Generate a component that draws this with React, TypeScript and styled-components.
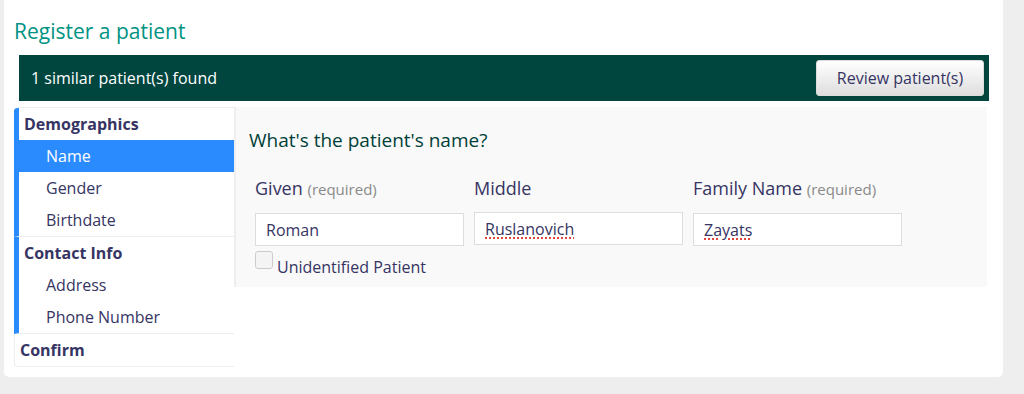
import React from 'react';
import styled, { createGlobalStyle } from 'styled-components';

const GlobalStyle = createGlobalStyle`
  html, body {
    margin: 0;
    padding: 0;
    background: #eeeeee;
    font-family: 'Open Sans', 'DejaVu Sans', sans-serif;
  }
`;

const navy = '#363463';
const blue = '#2a8bff';

const Card = styled.div`
  box-sizing: border-box;
  margin-left: 4px;
  width: 999px;
  height: 377px;
  background: #ffffff;
  border-radius: 0 0 5px 5px;
  padding: 19px 0 0 10px;
`;

const Title = styled.h2`
  margin: 0;
  font-size: 21px;
  line-height: 24px;
  font-weight: 400;
  color: #009384;
`;

const AlertBar = styled.div`
  box-sizing: border-box;
  margin: 12px 0 0 5px;
  width: 970px;
  height: 46px;
  background: #00463f;
  display: flex;
  align-items: center;
  justify-content: space-between;
  padding: 0 5px 0 12px;
  color: #ffffff;
  font-size: 16px;
`;

const ReviewButton = styled.button`
  box-sizing: border-box;
  width: 168px;
  height: 36px;
  border: 1px solid #dddddd;
  border-radius: 3px;
  background: linear-gradient(#ffffff, #dedede);
  color: ${navy};
  font-family: inherit;
  font-size: 16px;
  cursor: pointer;
`;

const Body = styled.div`
  display: flex;
  align-items: flex-start;
  margin-top: 6px;
`;

const Nav = styled.ul`
  list-style: none;
  margin: 0;
  padding: 0;
  width: 220px;
  border-top: 1px solid #eeeeee;
  border-top-left-radius: 4px;
  overflow: hidden;
`;

const Section = styled.li<{ $active: boolean }>`
  border-left: ${(p) => (p.$active ? `5px solid ${blue}` : '1px solid #eeeeee')};
  border-bottom: 1px solid #eeeeee;
  &:last-child {
    border-bottom-left-radius: 4px;
  }
`;

const SectionHead = styled.div`
  height: 32px;
  line-height: 32px;
  padding-left: 5px;
  font-size: 16px;
  font-weight: 700;
  color: ${navy};
`;

const NavItem = styled.div<{ $selected?: boolean }>`
  height: 32px;
  line-height: 32px;
  padding-left: 27px;
  font-size: 16px;
  color: ${(p) => (p.$selected ? '#ffffff' : navy)};
  background: ${(p) => (p.$selected ? blue : 'transparent')};
`;

const Content = styled.div`
  box-sizing: border-box;
  width: 753px;
  height: 180px;
  background: #f9f9f9;
  border-left: 2px solid #eeeeee;
  padding: 21px 0 0 13px;
`;

const Question = styled.h3`
  margin: 0;
  font-size: 19px;
  line-height: 24px;
  font-weight: 400;
  color: #003f38;
`;

const Fields = styled.div`
  display: flex;
  gap: 10px;
  margin: 24px 0 0 6px;
`;

const Field = styled.div`
  width: 209px;
`;

const Label = styled.label`
  display: block;
  font-size: 18px;
  line-height: 24px;
  color: ${navy};
`;

const Hint = styled.span`
  font-size: 15px;
  color: #8a8a8a;
`;

const InputBox = styled.div`
  position: relative;
  margin-top: 12px;
`;

const TextInput = styled.input`
  box-sizing: border-box;
  display: block;
  width: 100%;
  height: 33px;
  border: 1px solid #dddddd;
  background: #ffffff;
  padding: 0 0 0 10px;
  font-family: inherit;
  font-size: 16px;
  color: ${navy};
  outline: none;
`;

const Squiggle = styled.span`
  position: absolute;
  left: 11px;
  top: 5px;
  font-size: 16px;
  line-height: 22px;
  color: transparent;
  pointer-events: none;
  text-decoration: underline dotted #e0463e;
  text-decoration-thickness: 2px;
  text-underline-offset: 3px;
`;

const CheckRow = styled.label`
  display: flex;
  align-items: flex-start;
  gap: 4px;
  margin: 5px 0 0 6px;
  font-size: 16px;
  color: ${navy};
`;

const CheckBox = styled.span`
  box-sizing: border-box;
  width: 18px;
  height: 18px;
  border: 1px solid #cccccc;
  border-radius: 3px;
  background: #f4f4f4;
`;

const CheckText = styled.span`
  padding-top: 6px;
  line-height: 20px;
`;

const sections = [
  { title: 'Demographics', items: ['Name', 'Gender', 'Birthdate'], active: true },
  { title: 'Contact Info', items: ['Address', 'Phone Number'], active: true },
  { title: 'Confirm', items: [], active: false },
];

const fields = [
  { label: 'Given', required: true, value: 'Roman', misspelt: false },
  { label: 'Middle', required: false, value: 'Ruslanovich', misspelt: true },
  { label: 'Family Name', required: true, value: 'Zayats', misspelt: true },
];

const App: React.FC = () => (
  <>
    <GlobalStyle />
    <Card>
      <Title>Register a patient</Title>
      <AlertBar>
        <span>1 similar patient(s) found</span>
        <ReviewButton>Review patient(s)</ReviewButton>
      </AlertBar>
      <Body>
        <Nav>
          {sections.map((s) => (
            <Section key={s.title} $active={s.active}>
              <SectionHead>{s.title}</SectionHead>
              {s.items.map((it) => (
                <NavItem key={it} $selected={it === 'Name'}>{it}</NavItem>
              ))}
            </Section>
          ))}
        </Nav>
        <Content>
          <Question>What's the patient's name?</Question>
          <Fields>
            {fields.map((f) => (
              <Field key={f.label}>
                <Label>
                  {f.label} {f.required && <Hint>(required)</Hint>}
                </Label>
                <InputBox>
                  <TextInput defaultValue={f.value} spellCheck={false} />
                  {f.misspelt && <Squiggle>{f.value}</Squiggle>}
                </InputBox>
              </Field>
            ))}
          </Fields>
          <CheckRow>
            <CheckBox />
            <CheckText>Unidentified Patient</CheckText>
          </CheckRow>
        </Content>
      </Body>
    </Card>
  </>
);

export default App;
